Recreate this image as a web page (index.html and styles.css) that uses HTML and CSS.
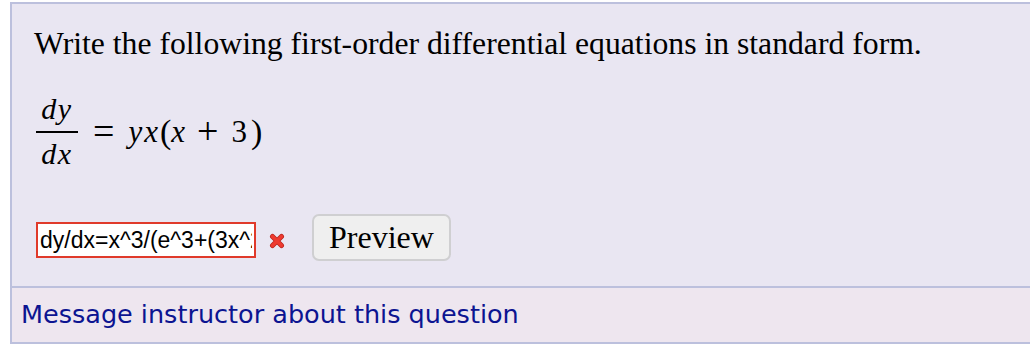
FILE: index.html
```html
<!DOCTYPE html>
<html lang="en">
<head>
    <meta charset="UTF-8">
    <meta name="viewport" content="width=device-width, initial-scale=1.0">
    <title>Question</title>
    <link rel="stylesheet" href="styles.css">
</head>
<body>
    <div class="problem">
        <div class="problem-body">
            <p class="prompt">Write the following first-order differential equations in standard form.</p>

            <div class="math">
                <span class="frac">
                    <span class="num">dy</span>
                    <span class="bar"></span>
                    <span class="den">dx</span>
                </span>
                <span class="rel">=</span>
                <span class="mi">yx</span><span class="mo">(</span><span class="mi">x</span><span class="op">+</span><span class="mn">3</span><span class="mo">)</span>
            </div>

            <div class="answer-row">
                <input type="text" class="answer incorrect" value="dy/dx=x^3/(e^3+(3x^2)">
                <span class="mark" title="incorrect">
                    <svg width="16" height="16" viewBox="0 0 16 16">
                        <path d="M3.5 3.5 L12.5 12.5 M12.5 3.5 L3.5 12.5" stroke="#b8231c" stroke-width="5" stroke-linecap="round"/>
                        <path d="M3.5 3.5 L12.5 12.5 M12.5 3.5 L3.5 12.5" stroke="#ee3a30" stroke-width="3.6" stroke-linecap="round"/>
                    </svg>
                </span>
                <button class="btn-preview">Preview</button>
            </div>
        </div>

        <!-- Pie del problema -->
        <div class="problem-footer">
            <a href="#" class="msg-link">Message instructor about this question</a>
        </div>
    </div>
</body>
</html>
```

FILE: styles.css
```css
* {
    margin: 0;
    padding: 0;
    box-sizing: border-box;
}

body {
    font-family: 'Liberation Serif', 'Times New Roman', serif;
    background: #ffffff;
    color: #000;
}

.problem {
    margin: 2px 0 0 10px;
    border: 2px solid #bcc0dd;
    border-right: none;
    background: #e9e6f2;
}

.problem-body {
    padding: 22px 24px 25px 22px;
}

.prompt {
    font-size: 31.7px;
    line-height: 36px;
}

.math {
    display: flex;
    align-items: center;
    margin-top: 31px;
    margin-left: 2px;
    font-family: 'Liberation Serif', 'Times New Roman', serif;
    font-size: 31px;
    line-height: 31px;
}

.frac {
    display: inline-flex;
    flex-direction: column;
    align-items: center;
}

.num,
.den,
.mi {
    font-style: italic;
}

.mi {
    letter-spacing: 2px;
}

.num,
.den {
    font-size: 30px;
    letter-spacing: 1.5px;
}

.num {
    padding-bottom: 7px;
}

.den {
    padding-top: 5px;
}

.bar {
    display: block;
    width: 42px;
    height: 2px;
    background: #000;
}

.rel {
    margin: 0 14px 0 15px;
    font-size: 38px;
}

.op {
    margin: 0 13px 0 10px;
    font-size: 38px;
}

.mo {
    font-size: 34px;
}

.mn {
    margin-right: 4px;
}

.answer-row {
    display: flex;
    align-items: center;
    margin-top: 45px;
}

.answer {
    width: 220px;
    height: 36px;
    margin: 5px 0 0 2px;
    padding: 0 2px;
    border: 2px solid #e03a2b;
    background: #fff;
    font-family: 'Liberation Sans', Arial, sans-serif;
    font-size: 23px;
    color: #000;
    outline: none;
}

.mark {
    display: inline-flex;
    margin: 6px 0 0 13px;
}

.btn-preview {
    width: 139px;
    height: 47px;
    margin-left: 27px;
    border: 2px solid #cfcfd1;
    border-radius: 7px;
    background: #efefef;
    font-family: 'Liberation Serif', 'Times New Roman', serif;
    font-size: 32px;
    color: #000;
    cursor: pointer;
}

.problem-footer {
    border-top: 2px solid #bcc0dd;
    background: #eee6ef;
    height: 56px;
    padding: 11px 9px 0;
}

.msg-link {
    font-family: 'DejaVu Sans', Verdana, sans-serif;
    font-size: 25.5px;
    line-height: 30px;
    color: #0c1491;
    text-decoration: none;
}
```
